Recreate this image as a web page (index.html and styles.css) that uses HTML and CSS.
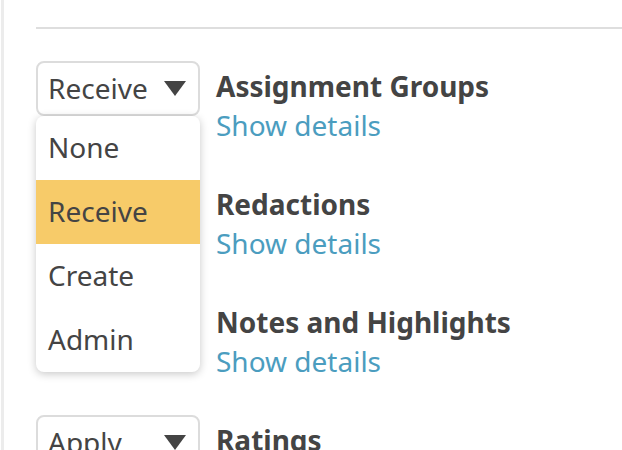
FILE: index.html
```html
<!DOCTYPE html>
<html lang="en">
<head>
<meta charset="utf-8">
<title>Permissions</title>
<link rel="stylesheet" href="styles.css">
</head>
<body>
<div class="page">
  <div class="rule"></div>
  <div class="rows">
    <div class="row">
      <div class="control">
        <div class="select">
          <span>Receive</span>
          <svg class="caret" width="22" height="15" viewBox="0 0 22 15"><polygon points="0,0 22,0 11,15" fill="#444"/></svg>
        </div>
        <ul class="menu">
          <li class="item">None</li>
          <li class="item active">Receive</li>
          <li class="item">Create</li>
          <li class="item">Admin</li>
        </ul>
      </div>
      <div class="info">
        <h3 class="title">Assignment Groups</h3>
        <a class="link" href="#">Show details</a>
      </div>
    </div>
    <div class="row">
      <div class="control"></div>
      <div class="info">
        <h3 class="title">Redactions</h3>
        <a class="link" href="#">Show details</a>
      </div>
    </div>
    <div class="row">
      <div class="control"></div>
      <div class="info">
        <h3 class="title">Notes and Highlights</h3>
        <a class="link" href="#">Show details</a>
      </div>
    </div>
    <div class="row">
      <div class="control">
        <div class="select">
          <span>Apply</span>
          <svg class="caret" width="22" height="15" viewBox="0 0 22 15"><polygon points="0,0 22,0 11,15" fill="#444"/></svg>
        </div>
      </div>
      <div class="info">
        <h3 class="title">Ratings</h3>
        <a class="link" href="#">Show details</a>
      </div>
    </div>
  </div>
</div>
</body>
</html>
```
FILE: styles.css
```css
html, body {
  margin: 0;
  padding: 0;
  background: #fff;
  height: 100%;
  overflow: hidden;
}
body {
  font-family: "Noto Sans", "Open Sans", sans-serif;
  color: #444;
  font-size: 28px;
}
.page {
  margin-left: 1px;
  border-left: 3px solid #ececec;
  min-height: 100%;
  padding-top: 27px;
  padding-left: 32px;
  box-sizing: border-box;
}
.rule {
  height: 2px;
  background: #dedede;
  margin-bottom: 32px;
}
.rows {
  display: flex;
  flex-direction: column;
  gap: 33px;
}
.row {
  display: flex;
  gap: 16px;
  align-items: flex-start;
}
.control {
  position: relative;
  width: 164px;
  flex: none;
}
.select {
  box-sizing: border-box;
  height: 55px;
  border: 2px solid #dcdcdc;
  border-radius: 8px;
  padding: 0 12px 2px 10px;
  display: flex;
  align-items: center;
  justify-content: space-between;
  background: #fff;
}
.caret {
  display: block;
  margin-top: 2px;
}
.menu {
  position: absolute;
  top: 100%;
  left: 0;
  width: 164px;
  margin: 0;
  padding: 0;
  list-style: none;
  background: #fff;
  border-radius: 8px;
  overflow: hidden;
  box-shadow: 0 2px 8px rgba(0, 0, 0, 0.22);
  z-index: 2;
}
.item {
  box-sizing: border-box;
  height: 64px;
  display: flex;
  align-items: center;
  padding: 0 0 2px 12px;
}
.item.active {
  background: #f7cb69;
}
.info {
  padding-top: 6px;
}
.title {
  margin: 0;
  font-size: 28px;
  font-weight: 700;
  line-height: 38px;
  color: #444;
}
.link {
  display: block;
  line-height: 41px;
  color: #4b9dbf;
  text-decoration: none;
}
```
